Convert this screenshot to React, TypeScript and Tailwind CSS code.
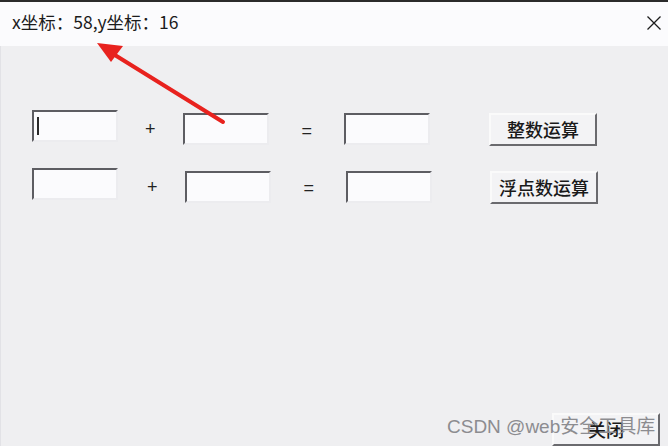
import type { ReactNode } from "react";

const cjk = { fontFamily: '"Noto Sans CJK SC", "Noto Sans", sans-serif' };

// sunken edit box, classic win32 look
function Field({ className = "", caret = false }: { className?: string; caret?: boolean }) {
  return (
    <div
      className={`w-[86px] h-[32px] bg-[#fbfbfd] border-2 border-t-[#5d5d62] border-l-[#5d5d62] border-r-[#ececef] border-b-[#ececef] flex items-center pl-[3px] ${className}`}
    >
      {caret && <div className="w-[2px] h-[18px] bg-[#2a2a2a]" />}
    </div>
  );
}

function Btn({ children, className = "" }: { children: ReactNode; className?: string }) {
  return (
    <button
      className={`w-[108px] h-[33px] bg-[#f3f3f5] border-2 border-t-[#fafafa] border-l-[#fafafa] border-r-[#6a6a6e] border-b-[#6a6a6e] text-[18px] text-[#1a1a1a] font-medium flex items-center justify-center ${className}`}
      style={cjk}
    >
      {children}
    </button>
  );
}

function Op({ children, className = "" }: { children: ReactNode; className?: string }) {
  return (
    <span className={`text-[18px] text-[#222] leading-none ${className}`} style={{ fontFamily: '"Liberation Sans", sans-serif' }}>
      {children}
    </span>
  );
}

export default function App() {
  return (
    <div className="relative w-[668px] h-[446px] overflow-hidden flex flex-col bg-[#efeff1]">
      {/* title bar */}
      <div className="h-[2px] bg-[#2b2b2b]" />
      <div className="h-[44px] bg-[#fbfbfd] flex items-center justify-between pl-[12px] pr-[6px]">
        <span className="text-[17.5px] text-[#1c1c1c] -mt-[3px]" style={cjk}>
          x坐标：58,y坐标：16
        </span>
        <svg width="16" height="16" viewBox="0 0 16 16" className="-mt-[2px]">
          <path d="M1.5 1.5 L14.5 14.5 M14.5 1.5 L1.5 14.5" stroke="#1c1c1c" strokeWidth="1.3" fill="none" />
        </svg>
      </div>

      {/* form */}
      <div className="flex-1 flex flex-col border-l border-[#e2e2e6]">
        <div className="flex items-start pt-[64px] pl-[31px]">
          <Field caret />
          <Op className="ml-[27px] mt-[10px]">+</Op>
          <Field className="ml-[27px] mt-[3px]" />
          <Op className="ml-[33px] mt-[12px]">=</Op>
          <Field className="ml-[32px] mt-[3px]" />
          <Btn className="ml-[59px] mt-[3px]">整数运算</Btn>
        </div>
        <div className="flex items-start pt-[22px] pl-[31px]">
          <Field />
          <Op className="ml-[29px] mt-[10px]">+</Op>
          <Field className="ml-[27px] mt-[3px]" />
          <Op className="ml-[33px] mt-[11px]">=</Op>
          <Field className="ml-[32px] mt-[3px]" />
          <Btn className="ml-[58px] mt-[3px]">浮点数运算</Btn>
        </div>
        <div className="mt-auto flex justify-end pr-[8px]">
          <Btn>关闭</Btn>
        </div>
      </div>

      {/* pointer annotation */}
      <svg className="absolute left-0 top-0 pointer-events-none" width="668" height="446">
        <line x1="223" y1="122" x2="110" y2="52" stroke="#e8221e" strokeWidth="4" strokeLinecap="round" />
        <polygon points="97,43 123,46 111,62" fill="#e8221e" />
      </svg>

      {/* watermark */}
      <span
        className="absolute left-[447px] top-[415px] text-[19px] text-[#8c8c90] whitespace-nowrap leading-[24px]"
        style={{ fontFamily: '"Liberation Sans", "Noto Sans CJK SC", sans-serif' }}
      >
        CSDN @web安全工具库
      </span>
    </div>
  );
}
